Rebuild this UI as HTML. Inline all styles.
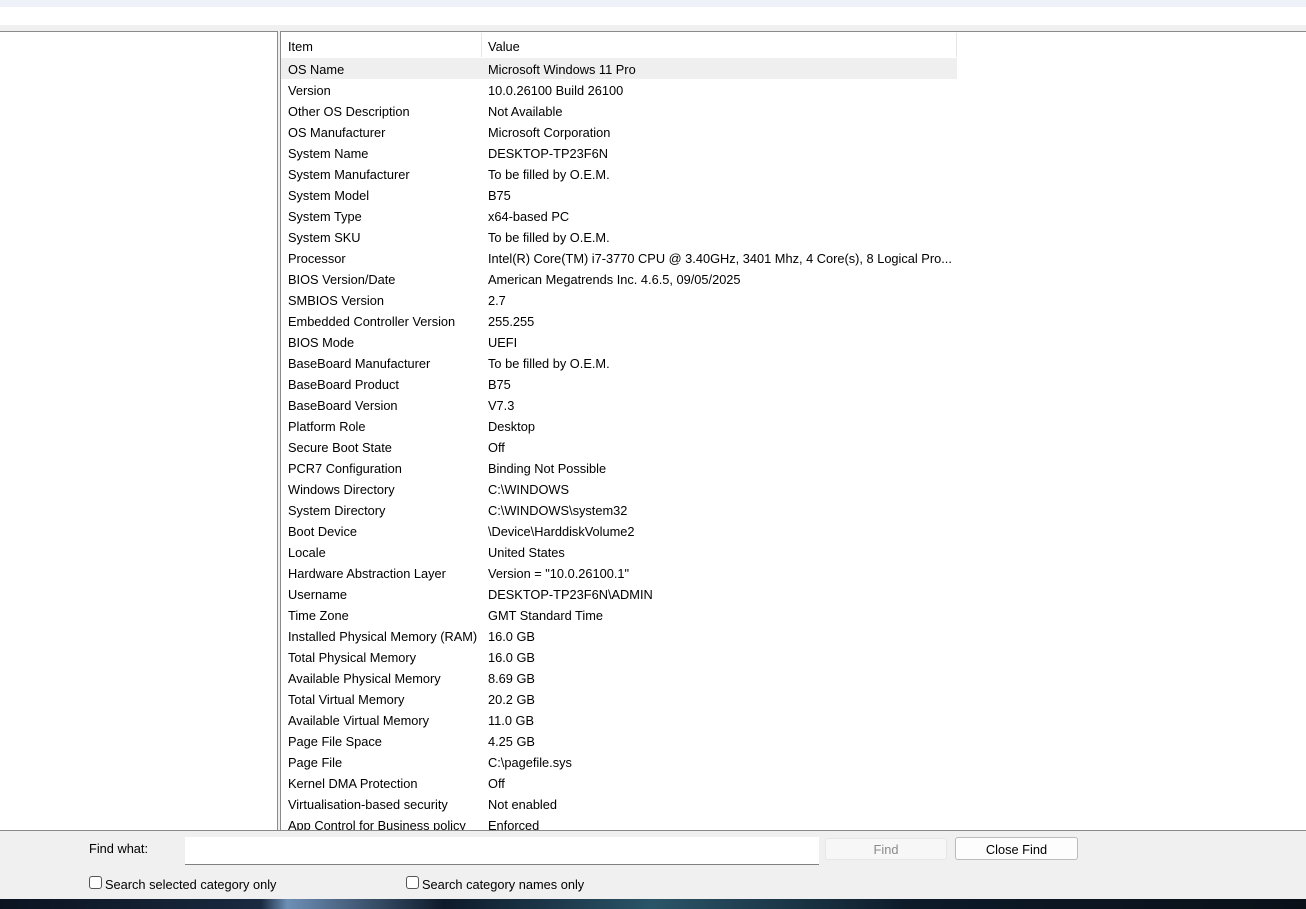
<!DOCTYPE html>
<html><head><meta charset="utf-8"><style>
*{margin:0;padding:0;box-sizing:border-box}
body{width:1306px;height:909px;overflow:hidden;background:#fff;font-family:"Liberation Sans",sans-serif;font-size:12.8px;color:#000;position:relative}
.a{position:absolute}
.r{position:absolute;left:281px;width:676px;height:21px;line-height:23px}
.r span{position:absolute;top:0}
.r .k{left:7px}.r .v{left:207px;white-space:nowrap}
</style></head><body>
<div class="a" style="left:0;top:0;width:1306px;height:7px;background:#eef1f7"></div>
<div class="a" style="left:0;top:25px;width:1306px;height:6px;background:#f0f0f0"></div>
<div class="a" style="left:0;top:31px;width:278px;height:800px;border-top:1px solid #8a8a8a;border-right:1px solid #8a8a8a"></div>
<div class="a" style="left:278px;top:31px;width:2px;height:800px;background:#f0f0f0"></div>
<div class="a" style="left:280px;top:31px;width:1026px;height:800px;border-top:1px solid #8a8a8a;border-left:1px solid #8a8a8a;overflow:hidden">
</div>
<div class="a" style="left:481px;top:33px;width:1px;height:24px;background:#e5e5e5"></div>
<div class="a" style="left:956px;top:33px;width:1px;height:24px;background:#e5e5e5"></div>
<div class="r" style="top:35px"><span class="k">Item</span><span class="v">Value</span></div>
<div id="rows"></div>
<div class="a" style="left:0;top:830px;width:1306px;height:70px;background:#f0f0f0;border-top:1px solid #8a8a8a"></div>
<div class="a" style="left:89px;top:841px">Find what:</div>
<div class="a" style="left:185px;top:837px;width:634px;height:28px;background:#fff;border-bottom:1px solid #808080"></div>
<div class="a" style="left:825px;top:838px;width:122px;height:22px;background:#f7f7f7;border:1px solid #e6e6e6;border-radius:3px;color:#8a8a8a;text-align:center;line-height:22px">Find</div>
<div class="a" style="left:955px;top:837px;width:123px;height:23px;background:#fdfdfd;border:1px solid #bcbcbc;border-radius:3px;text-align:center;line-height:23px">Close Find</div>
<div class="a" style="left:89px;top:876px;width:13px;height:13px;border:1px solid #555;border-radius:3px;background:#fff"></div>
<div class="a" style="left:105px;top:877px">Search selected category only</div>
<div class="a" style="left:406px;top:876px;width:13px;height:13px;border:1px solid #555;border-radius:3px;background:#fff"></div>
<div class="a" style="left:422px;top:877px">Search category names only</div>
<div class="a" style="left:0;top:899px;width:1306px;height:10px;background:linear-gradient(90deg,#0b1320 0,#1a2a40 20%,#6d8fb5 22%,#0e1a2a 34%,#2a5568 50%,#0d1a28 70%,#0a1018 100%)"></div>
<script>
var d=[["OS Name","Microsoft Windows 11 Pro"],["Version","10.0.26100 Build 26100"],["Other OS Description","Not Available"],["OS Manufacturer","Microsoft Corporation"],["System Name","DESKTOP-TP23F6N"],["System Manufacturer","To be filled by O.E.M."],["System Model","B75"],["System Type","x64-based PC"],["System SKU","To be filled by O.E.M."],["Processor","Intel(R) Core(TM) i7-3770 CPU @ 3.40GHz, 3401 Mhz, 4 Core(s), 8 Logical Pro..."],["BIOS Version/Date","American Megatrends Inc. 4.6.5, 09/05/2025"],["SMBIOS Version","2.7"],["Embedded Controller Version","255.255"],["BIOS Mode","UEFI"],["BaseBoard Manufacturer","To be filled by O.E.M."],["BaseBoard Product","B75"],["BaseBoard Version","V7.3"],["Platform Role","Desktop"],["Secure Boot State","Off"],["PCR7 Configuration","Binding Not Possible"],["Windows Directory","C:\\WINDOWS"],["System Directory","C:\\WINDOWS\\system32"],["Boot Device","\\Device\\HarddiskVolume2"],["Locale","United States"],["Hardware Abstraction Layer","Version = \"10.0.26100.1\""],["Username","DESKTOP-TP23F6N\\ADMIN"],["Time Zone","GMT Standard Time"],["Installed Physical Memory (RAM)","16.0 GB"],["Total Physical Memory","16.0 GB"],["Available Physical Memory","8.69 GB"],["Total Virtual Memory","20.2 GB"],["Available Virtual Memory","11.0 GB"],["Page File Space","4.25 GB"],["Page File","C:\\pagefile.sys"],["Kernel DMA Protection","Off"],["Virtualisation-based security","Not enabled"],["App Control for Business policy","Enforced"]];
var h="";d.forEach(function(x,i){var t=58+i*21;h+='<div class="r" style="top:'+t+'px;'+(i==0?'background:#efefef;':'')+'"><span class="k">'+x[0].replace(/</g,"&lt;")+'</span><span class="v">'+x[1]+'</span></div>';});
document.getElementById("rows").innerHTML=h;
</script>
</body></html>
